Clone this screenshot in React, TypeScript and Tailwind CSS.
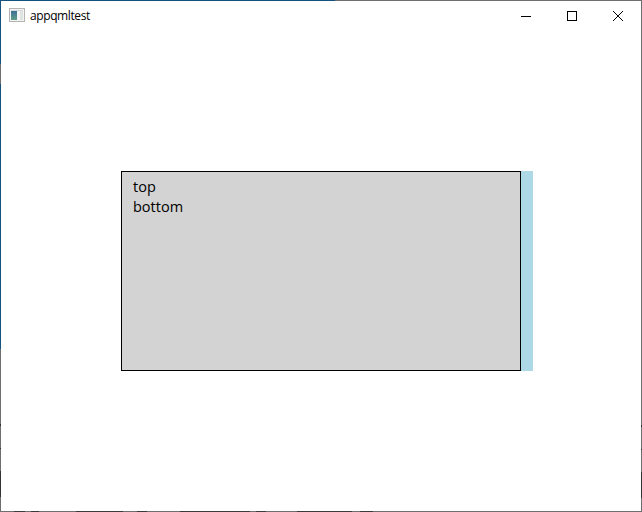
const bottomEdge = [
  { width: 14, dark: false },
  { width: 11, dark: true },
  { width: 6, dark: false },
  { width: 8, dark: true },
  { width: 37, dark: false },
  { width: 47, dark: true },
  { width: 14, dark: false },
  { width: 10, dark: true },
  { width: 33, dark: false },
  { width: 70, dark: true },
  { width: 6, dark: false },
  { width: 10, dark: true },
  { width: 31, dark: false },
  { width: 55, dark: true },
  { width: 8, dark: false },
  { width: 13, dark: true },
];

function WindowButtons() {
  return (
    <div className="flex">
      <div className="w-[46px] h-[30px] flex items-center justify-center">
        <svg width="12" height="12" viewBox="0 0 12 12" shapeRendering="crispEdges">
          <path d="M1 6.5h10" stroke="#000" strokeWidth="1" fill="none" />
        </svg>
      </div>
      <div className="w-[46px] h-[30px] flex items-center justify-center">
        <svg width="12" height="12" viewBox="0 0 12 12" shapeRendering="crispEdges">
          <rect x="1.5" y="1.5" width="9" height="9" stroke="#000" strokeWidth="1" fill="none" />
        </svg>
      </div>
      <div className="w-[46px] h-[30px] flex items-center justify-center">
        <svg width="12" height="12" viewBox="0 0 12 12">
          <path d="M1 1l10 10M11 1L1 11" stroke="#000" strokeWidth="1" fill="none" />
        </svg>
      </div>
    </div>
  );
}

function AppIcon() {
  return (
    <svg width="16" height="16" viewBox="0 0 16 16" shapeRendering="crispEdges">
      <defs>
        <linearGradient id="pane" x1="0" y1="0" x2="0" y2="1">
          <stop offset="0" stopColor="#3f6f9a" />
          <stop offset="1" stopColor="#5f9f86" />
        </linearGradient>
      </defs>
      <rect x="0.5" y="0.5" width="15" height="13" fill="#f4f4f4" stroke="#b4b4b4" />
      <rect x="2" y="2" width="12" height="1" fill="#d4d6d8" />
      <rect x="2" y="3" width="6" height="9" fill="url(#pane)" />
      <rect x="11" y="3" width="3" height="9" fill="#dfe3e2" />
    </svg>
  );
}

function SideEdge() {
  return (
    <div className="w-px flex flex-col shrink-0 bg-[#6e6e6e]">
      <div className="h-[424px]" />
      <div className="h-[2px] bg-[#333]" />
      <div className="h-[22px]" />
      <div className="h-px bg-[#333]" />
      <div className="h-[22px]" />
      <div className="h-[26px] bg-[#333]" />
    </div>
  );
}

export default function App() {
  return (
    <div className="w-[642px] h-[512px] flex flex-col bg-white overflow-hidden">
      {/* window frame picks up the desktop colour behind it */}
      <div className="h-px flex shrink-0">
        <div className="w-[335px] bg-[#15527f]" />
        <div className="flex-1 bg-[#6e6e6e]" />
      </div>
      <div className="flex flex-1 min-h-0">
        <div className="w-px flex flex-col shrink-0">
          <div className="h-[63px] bg-[#15527f]" />
          <div className="h-[20px] bg-[#6e6e6e]" />
          <div className="h-[265px] bg-[#15527f]" />
          <div className="h-[75px] bg-[#6e6e6e]" />
          <div className="h-[2px] bg-[#333]" />
          <div className="h-[22px] bg-[#6e6e6e]" />
          <div className="h-px bg-[#333]" />
          <div className="h-[22px] bg-[#6e6e6e]" />
          <div className="h-[26px] bg-[#333]" />
          <div className="flex-1 bg-[#6e6e6e]" />
        </div>
        <div className="flex-1 flex flex-col min-w-0">
          <div className="h-[30px] flex items-center justify-between shrink-0">
            <div className="flex items-center pl-[8px] gap-[5px]">
              <AppIcon />
              <span className="text-[12px] tracking-[-0.4px] text-black font-['Open_Sans',sans-serif]">appqmltest</span>
            </div>
            <WindowButtons />
          </div>
          <div className="flex-1 flex items-center pl-[120px]">
            <div className="w-[400px] h-[200px] bg-[#d3d3d3] border border-black pl-[11px] pt-[5px] text-[14.5px] leading-[20px] text-black font-['Open_Sans',sans-serif] shrink-0">
              <div>top</div>
              <div>bottom</div>
            </div>
            <div className="w-[12px] h-[200px] bg-[#add8e6] shrink-0" />
          </div>
        </div>
        <SideEdge />
      </div>
      <div className="h-px flex bg-[#6e6e6e] shrink-0">
        {bottomEdge.map((seg, i) => (
          <div key={i} className={seg.dark ? 'bg-[#3a3a3a]' : ''} style={{ width: seg.width }} />
        ))}
      </div>
    </div>
  );
}
